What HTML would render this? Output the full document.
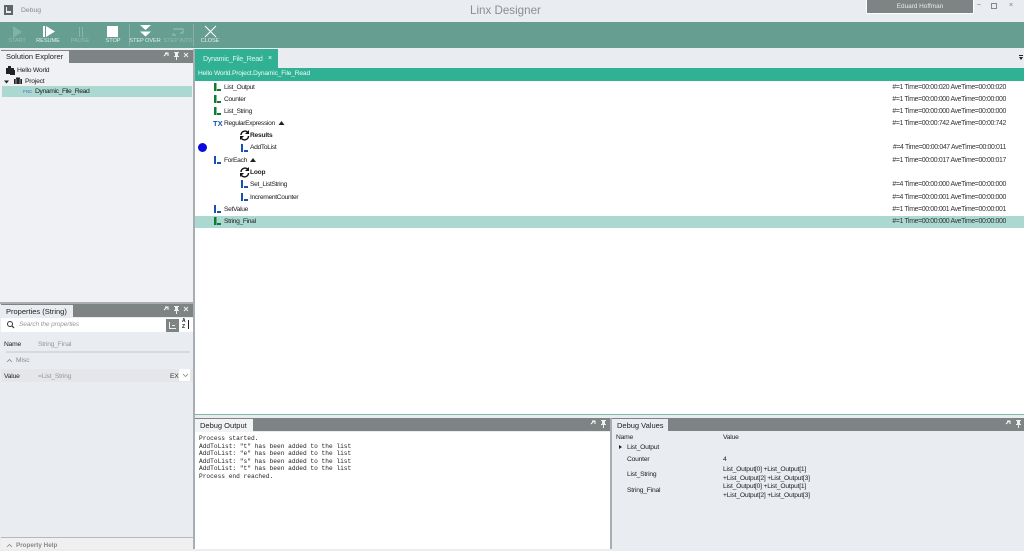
<!DOCTYPE html>
<html><head><meta charset="utf-8"><style>
html,body{margin:0;padding:0}
body{width:1024px;height:549px;overflow:hidden;position:relative;background:#e9ecf1;font-family:"Liberation Sans",sans-serif;font-size:6.7px;letter-spacing:-.33px;color:#222}
.a,.t{position:absolute}
.t{white-space:nowrap;line-height:10px}
.lb{color:#e4efec;font-size:5.6px;letter-spacing:-.05px;text-align:center;width:40px;line-height:8px;top:37px}
.dim{opacity:.3}
.time{position:absolute;right:18px;white-space:nowrap;line-height:10px;font-size:6.9px;letter-spacing:-.35px;color:#333}
.mono{font-family:"Liberation Mono",monospace;font-size:6.2px;letter-spacing:0;line-height:7.6px;color:#222}
.tab{font-size:7.5px;letter-spacing:0}
.p{font-size:6.7px;letter-spacing:-.2px}
</style></head><body>
<!-- title bar -->
<div class="a" style="left:4px;top:5px;width:9px;height:10px;background:#5f6665"></div>
<div class="a" style="left:6px;top:7px;width:5px;height:6px;background:#e9ecf1"></div>
<div class="a" style="left:7px;top:7px;width:4px;height:4px;background:#5f6665"></div>
<div class="t" style="left:21px;top:6px;color:#888;font-size:6.8px;letter-spacing:0">Debug</div>
<div class="t" style="left:470px;top:5px;font-size:11.6px;letter-spacing:0;color:#8b8f92;line-height:12px">Linx Designer</div>
<div class="a" style="left:866px;top:0;width:106px;height:13px;background:#7e8484;border:1px solid #fff;border-top:0;color:#e8e8e8;font-size:6.4px;letter-spacing:0;text-align:center;line-height:13px">Eduard Hoffman</div>
<div class="t" style="left:977px;top:0;color:#777;font-size:7px">–</div>
<div class="a" style="left:991px;top:3px;width:4px;height:4px;border:1px solid #888"></div>
<div class="t" style="left:1009px;top:1px;color:#777;font-size:7px">×</div>
<!-- toolbar -->
<div class="a" style="left:0;top:22px;width:1024px;height:26px;background:#669e91"></div>
<div class="a" style="left:129px;top:24px;width:1px;height:22px;background:#86b2a7"></div>
<div class="a" style="left:193px;top:24px;width:1px;height:22px;background:#86b2a7"></div>
<svg class="a" style="left:0;top:22px" width="240" height="26">
<path d="M13 4l9 6-9 6z" fill="#fff" opacity=".2"/>
<path d="M43 4h2v11h-2zM46 4l9 5.500-9 5.500z" fill="#fff"/>
<path d="M79 5h1v10h-1zM82 5h1v10h-1z" fill="#fff" opacity=".25"/>
<rect x="107" y="4" width="11" height="11" fill="#fff"/>
<path d="M140 3h11l-5.500 5zM140 9.500h11l-5.500 5z" fill="#fff"/>
<path d="M173 7h10v4h-3M176 13h-3v-2" fill="none" stroke="#fff" stroke-width="1.200" opacity=".3"/>
<path d="M205 4l11 11M216 4l-11 11" stroke="#fff" stroke-width="1.100"/>
</svg>
<div class="t lb dim" style="left:-3px;color:#fff">START</div>
<div class="t lb" style="left:28px">RESUME</div>
<div class="t lb dim" style="left:60px;color:#fff">PAUSE</div>
<div class="t lb" style="left:93px">STOP</div>
<div class="t lb" style="left:125px">STEP OVER</div>
<div class="t lb dim" style="left:158px;color:#fff">STEP INTO</div>
<div class="t lb" style="left:190px">CLOSE</div>
<!-- Solution Explorer -->
<div class="a" style="left:0;top:50px;width:194px;height:253px;background:#f0f1f4"></div>
<div class="a" style="left:1px;top:50px;width:192px;height:13px;background:#7e8484"></div>
<div class="a" style="left:1px;top:51px;width:68px;height:12px;background:#f0f1f4"></div>
<div class="t tab" style="left:6px;top:52px">Solution Explorer</div>
<svg class="a" style="left:160px;top:50px" width="34" height="12"><path d="M4 6l3-3M5 3h3v3" stroke="#fff" fill="none"/><path d="M14 2h5v1h-1v3h1v1h-2v3h-1v-3h-2v-1h1v-3h-1z" fill="#eee"/><path d="M24 3l4 4M28 3l-4 4" stroke="#eee"/></svg>
<svg class="a" style="left:4px;top:65px" width="20" height="21"><path d="M2 3h8v6h-8z" fill="#222"/><path d="M4 1h3v2h-3zM6 5h5v5h-5z" fill="#222"/><path d="M0 15.500h5l-2.500 3z" fill="#222"/><path d="M10 14h8v5h-8z" fill="#222"/><path d="M12 12.500h4v1.500h-4z" fill="#222"/><path d="M12 14v5M16 14v5" stroke="#f0f1f4" stroke-width=".6"/></svg>
<div class="t" style="left:17px;top:66px;font-size:6.800px;letter-spacing:-.25px">Hello World</div>
<div class="t" style="left:25px;top:77px;font-size:6.800px;letter-spacing:-.25px">Project</div>
<div class="a" style="left:2px;top:86px;width:190px;height:11px;background:#abd8d0"></div>
<div class="t" style="left:23px;top:87px;font-size:4.500px;letter-spacing:0;color:#4b6fb5">FNC</div>
<div class="t" style="left:35px;top:87px;font-size:6.800px;letter-spacing:-.4px">Dynamic_File_Read</div>
<!-- main tabs -->
<div class="a" style="left:195px;top:49px;width:829px;height:19px;background:#e9ecf1"></div>
<div class="a" style="left:195px;top:49px;width:83px;height:19px;background:#30b193"></div>
<div class="t" style="left:203px;top:54px;color:#dff3ee;font-size:7.100px;letter-spacing:-.25px">Dynamic_File_Read</div>
<div class="t" style="left:268px;top:54px;color:#fff;font-size:7px;letter-spacing:0">×</div>
<svg class="a" style="left:1018px;top:54px" width="6" height="7"><path d="M1 1h4v1h-4zM1 3h4l-2 3z" fill="#222"/></svg>
<div class="a" style="left:195px;top:68px;width:829px;height:13px;background:#30b193"></div>
<div class="t" style="left:198px;top:69px;color:#f0fbf8;font-size:6.600px;letter-spacing:-.15px">Hello World.Project.Dynamic_File_Read</div>
<!-- main canvas -->
<div class="a" style="left:195px;top:81px;width:829px;height:333px;background:#fff"></div>
<div class="a" style="left:195px;top:414px;width:829px;height:1px;background:#7fb5a8"></div>
<div class="a" style="left:195px;top:216px;width:829px;height:12px;background:#abd8d0"></div>
<div class="a" style="left:198px;top:143px;width:9px;height:9px;border-radius:50%;background:#0a0ae0"></div>
<svg class="a" style="left:0;top:0" width="290" height="230">
<g fill="#0f7a33"><path d="M214 83h2.500v8h-2.500zM217 89h4v2h-4zM214 95h2.500v8h-2.500zM217 101h4v2h-4zM214 107h2.500v8h-2.500zM217 113h4v2h-4zM214 217h2.500v8h-2.500zM217 223h4v2h-4z"/></g>
<g fill="#1550b8"><path d="M241 144h2v8h-2zM244 150h4v2h-4zM214 156h2v8h-2zM217 162h4v2h-4zM241 180h2v8h-2zM244 186h4v2h-4zM241 193h2v8h-2zM244 199h4v2h-4zM214 205h2v8h-2zM217 211h4v2h-4z"/></g>
<path d="M281.500 121l3 4h-6zM253 158l3 4h-6z" fill="#222"/>
<g fill="none" stroke="#111" stroke-width="1.400"><path d="M241 135a4 4 0 0 1 7-2.500M248.500 136a4 4 0 0 1-7 2.500"/><path d="M241 172a4 4 0 0 1 7-2.500M248.500 173a4 4 0 0 1-7 2.500"/></g>
<path d="M249 130v4h-4zM240 140v-4h4zM249 167v4h-4zM240 177v-4h4z" fill="#111"/>
</svg>
<div class="t" style="left:213px;top:119px;color:#1550b8;font-size:7.500px;letter-spacing:0;font-weight:bold">TX</div>
<div class="t" style="left:224px;top:83px">List_Output</div>
<div class="t" style="left:224px;top:95px">Counter</div>
<div class="t" style="left:224px;top:107px">List_String</div>
<div class="t" style="left:224px;top:119px">RegularExpression</div>
<div class="t" style="left:250px;top:131px;font-weight:bold;font-size:6.600px;letter-spacing:-.2px">Results</div>
<div class="t" style="left:250px;top:143px">AddToList</div>
<div class="t" style="left:224px;top:156px">ForEach</div>
<div class="t" style="left:250px;top:168px;font-weight:bold;font-size:6.600px;letter-spacing:-.2px">Loop</div>
<div class="t" style="left:250px;top:180px">Set_ListString</div>
<div class="t" style="left:250px;top:193px">IncrementCounter</div>
<div class="t" style="left:224px;top:205px">SetValue</div>
<div class="t" style="left:224px;top:217px">String_Final</div>
<div class="time" style="top:83px">#=1 Time=00:00:020 AveTime=00:00:020</div>
<div class="time" style="top:95px">#=1 Time=00:00:000 AveTime=00:00:000</div>
<div class="time" style="top:107px">#=1 Time=00:00:000 AveTime=00:00:000</div>
<div class="time" style="top:119px">#=1 Time=00:00:742 AveTime=00:00:742</div>
<div class="time" style="top:143px">#=4 Time=00:00:047 AveTime=00:00:011</div>
<div class="time" style="top:156px">#=1 Time=00:00:017 AveTime=00:00:017</div>
<div class="time" style="top:180px">#=4 Time=00:00:000 AveTime=00:00:000</div>
<div class="time" style="top:193px">#=4 Time=00:00:001 AveTime=00:00:000</div>
<div class="time" style="top:205px">#=1 Time=00:00:001 AveTime=00:00:001</div>
<div class="time" style="top:217px">#=1 Time=00:00:000 AveTime=00:00:000</div>
<!-- Properties -->
<div class="a" style="left:0;top:302px;width:194px;height:2px;background:#a8adb1"></div>
<div class="a" style="left:193px;top:49px;width:2px;height:500px;background:#a8adb1"></div>
<div class="a" style="left:1px;top:304px;width:192px;height:13px;background:#7e8484"></div>
<div class="a" style="left:1px;top:305px;width:72px;height:13px;background:#e9ecf1"></div>
<div class="t tab" style="left:6px;top:307px">Properties (String)</div>
<svg class="a" style="left:160px;top:304px" width="34" height="12"><path d="M4 6l3-3M5 3h3v3" stroke="#fff" fill="none"/><path d="M14 2h5v1h-1v3h1v1h-2v3h-1v-3h-2v-1h1v-3h-1z" fill="#eee"/><path d="M24 3l4 4M28 3l-4 4" stroke="#eee"/></svg>
<div class="a" style="left:1px;top:318px;width:192px;height:14px;background:#fff"></div>
<svg class="a" style="left:6px;top:320px" width="9" height="9"><circle cx="4" cy="4" r="2.500" fill="none" stroke="#333"/><path d="M6 6l2 2" stroke="#333" stroke-width="1.200"/></svg>
<div class="t" style="left:19px;top:320px;color:#999;font-style:italic;font-size:6.500px;letter-spacing:-.1px">Search the properties</div>
<div class="a" style="left:166px;top:319px;width:13px;height:13px;background:#7e8484"></div>
<div class="a" style="left:169px;top:322px;width:1px;height:7px;background:#eee"></div>
<div class="a" style="left:170px;top:328px;width:6px;height:1px;background:#eee"></div>
<div class="a" style="left:172px;top:325px;width:3px;height:1px;background:#eee"></div>
<div class="t" style="left:182px;top:319px;font-size:5px;letter-spacing:0;line-height:5.500px;font-weight:bold;color:#222">A<br>Z</div>
<div class="a" style="left:187.500px;top:320px;width:1px;height:9px;background:#222"></div>
<div class="t p" style="left:4px;top:340px">Name</div>
<div class="t p" style="left:38px;top:340px;color:#999">String_Final</div>
<div class="a" style="left:6px;top:351px;width:184px;height:2px;background:#d8dadc"></div>
<div class="t" style="left:16px;top:356px;color:#888;font-size:6.600px;letter-spacing:0">Misc</div>
<svg class="a" style="left:6px;top:358px" width="7" height="5"><path d="M1 4l2.500-2.500L6 4" fill="none" stroke="#888" stroke-width=".8"/></svg>
<div class="a" style="left:1px;top:369px;width:192px;height:13px;background:#e4e6ea"></div>
<div class="t p" style="left:4px;top:372px">Value</div>
<div class="t p" style="left:38px;top:372px;color:#999">=List_String</div>
<div class="t" style="left:170px;top:372px;font-size:6.500px;letter-spacing:0;color:#333">EX</div>
<div class="a" style="left:179px;top:369px;width:11px;height:12px;background:#fff"></div>
<svg class="a" style="left:182px;top:373px" width="7" height="5"><path d="M1 1l2.500 2.500L6 1" fill="none" stroke="#888" stroke-width=".8"/></svg>
<div class="a" style="left:1px;top:537px;width:192px;height:1px;background:#b5b9bc"></div>
<div class="a" style="left:1px;top:538px;width:192px;height:11px;background:#f0f0f0"></div>
<svg class="a" style="left:6px;top:543px" width="7" height="5"><path d="M1 4l2.500-2.500L6 4" fill="none" stroke="#888" stroke-width=".8"/></svg>
<div class="t" style="left:16px;top:541px;color:#888;font-weight:bold;font-size:6.300px;letter-spacing:0">Property Help</div>
<!-- Debug Output -->
<div class="a" style="left:195px;top:418px;width:415px;height:13px;background:#7e8484"></div>
<div class="a" style="left:195px;top:419px;width:58px;height:13px;background:#f2f3f5"></div>
<div class="t tab" style="left:200px;top:421px">Debug Output</div>
<div class="a" style="left:195px;top:432px;width:415px;height:117px;background:#fff"></div>
<div class="t mono" style="left:199px;top:435px">Process started.<br>AddToList: "t" has been added to the list<br>AddToList: "e" has been added to the list<br>AddToList: "s" has been added to the list<br>AddToList: "t" has been added to the list<br>Process end reached.</div>
<svg class="a" style="left:587px;top:418px" width="22" height="12"><path d="M4 6l3-3M5 3h3v3" stroke="#fff" fill="none"/><path d="M14 2h5v1h-1v3h1v1h-2v3h-1v-3h-2v-1h1v-3h-1z" fill="#eee"/></svg>
<!-- Debug Values -->
<div class="a" style="left:610px;top:418px;width:2px;height:131px;background:#a8adb1"></div>
<div class="a" style="left:612px;top:418px;width:412px;height:13px;background:#7e8484"></div>
<div class="a" style="left:612px;top:419px;width:56px;height:13px;background:#e9ecf1"></div>
<div class="t tab" style="left:617px;top:421px">Debug Values</div>
<svg class="a" style="left:1002px;top:418px" width="22" height="12"><path d="M4 6l3-3M5 3h3v3" stroke="#fff" fill="none"/><path d="M14 2h5v1h-1v3h1v1h-2v3h-1v-3h-2v-1h1v-3h-1z" fill="#eee"/></svg>
<div class="t p" style="left:616px;top:433px">Name</div>
<div class="t p" style="left:723px;top:433px">Value</div>
<div class="a" style="left:619px;top:445px;width:0;height:0;border:2px solid transparent;border-left:3px solid #222"></div>
<div class="t p" style="left:627px;top:443px">List_Output</div>
<div class="t p" style="left:627px;top:455px">Counter</div>
<div class="t p" style="left:723px;top:455px">4</div>
<div class="t p" style="left:627px;top:470px">List_String</div>
<div class="t p" style="left:723px;top:466px;line-height:8.500px">List_Output[0] +List_Output[1]<br>+List_Output[2] +List_Output[3]</div>
<div class="t p" style="left:627px;top:486px">String_Final</div>
<div class="t p" style="left:723px;top:483px;line-height:8.500px">List_Output[0] +List_Output[1]<br>+List_Output[2] +List_Output[3]</div>
</body></html>
